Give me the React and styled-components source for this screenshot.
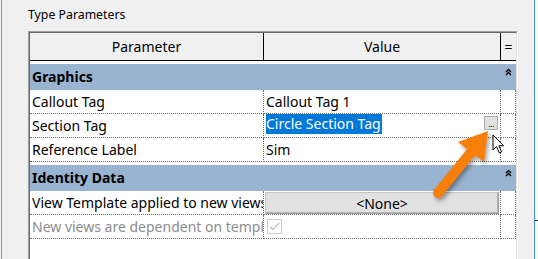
import React from "react";
import styled, { createGlobalStyle } from "styled-components";

const GlobalStyle = createGlobalStyle`
  html, body {
    margin: 0;
    padding: 0;
    background: #f0f0f0;
    font-family: "Noto Sans", "Open Sans", sans-serif;
  }
`;

const blue = "#99b4d1";
const dotted = "1px dotted #6f6f6f";

const Page = styled.div`
  position: relative;
  display: flex;
  width: 538px;
  height: 259px;
  overflow: hidden;
`;

const Frame = styled.div`
  box-sizing: border-box;
  width: 534px;
  height: 100%;
  margin-left: 1px;
  padding-left: 26px;
  border-left: 1px solid #6aa5dc;
  border-right: 1px solid #3f8fd9;
`;

const RightStrip = styled.div`
  flex: 1;
  background: #f9f9f9;
  display: flex;
  flex-direction: column;
  justify-content: flex-start;
  padding-top: 220px;

  > span {
    display: block;
    height: 1px;
    background: #333;
  }
`;

const Title = styled.div`
  padding-top: 6px;
  line-height: 17px;
  font-size: 12.3px;
  color: #000;
`;

const TableOuter = styled.div`
  margin-top: 8px;
  width: 490px;
  box-sizing: border-box;
  height: 240px;
  border: 1px solid;
  border-color: #a0a0a0 #ffffff #ffffff #a0a0a0;
`;

const TableInner = styled.div`
  height: 100%;
  box-sizing: border-box;
  border: 1px solid;
  border-color: #696969 #e3e3e3 #e3e3e3 #696969;
  background: #fff;
`;

const Grid = styled.div`
  display: grid;
  grid-template-columns: 234px 237px 15px;
  font-size: 14px;
  color: #000;
`;

const HeadCell = styled.div`
  height: 28px;
  box-sizing: border-box;
  background: #f0f0f0;
  border-bottom: 1px solid #000;
  border-right: ${(p) => (p.$last ? "none" : "1px solid #000")};
  display: flex;
  align-items: center;
  justify-content: center;
  padding-bottom: 1px;
`;

const GroupRow = styled.div`
  grid-column: 1 / -1;
  height: 29px;
  box-sizing: border-box;
  border-top: 3px solid #fff;
  background: ${blue};
  display: flex;
  justify-content: space-between;
  font-weight: bold;
`;

const GroupLabel = styled.span`
  padding-left: 2px;
  line-height: 25px;
`;

const Collapse = styled.span`
  width: 15px;
  display: flex;
  justify-content: center;
  padding-top: 4px;
`;

const Cell = styled.div`
  height: 24px;
  box-sizing: border-box;
  border-bottom: ${dotted};
  border-right: ${dotted};
  padding-left: ${(p) => (p.$pad ?? 2)}px;
  display: flex;
  align-items: center;
  justify-content: space-between;
  overflow: hidden;
  white-space: nowrap;
  color: ${(p) => (p.$muted ? "#8d8d8d" : "#000")};
`;

const Selected = styled.span`
  background: #0078d7;
  color: #fff;
  line-height: 20px;
  padding: 0 1px 0 0;
  align-self: flex-start;
`;

const DotsButton = styled.span`
  width: 14px;
  height: 14px;
  box-sizing: border-box;
  margin: 2px 2px 0 0;
  align-self: flex-start;
  background: #e1e1e1;
  border: 1px solid #adadad;
  font-size: 9px;
  line-height: 14px;
  text-align: center;
  letter-spacing: -0.5px;
`;

const NoneButton = styled.div`
  flex: 1;
  height: 22px;
  box-sizing: border-box;
  margin: 1px 1px 0 1px;
  align-self: flex-start;
  background: #e1e1e1;
  border: 1px solid;
  border-color: #c4c4c4 #a0a0a0 #a0a0a0 #c4c4c4;
  box-shadow: inset -1px -1px 0 #b4b4b4;
  display: flex;
  align-items: center;
  justify-content: center;
`;

const CheckBox = styled.span`
  width: 15px;
  height: 15px;
  box-sizing: border-box;
  margin-left: 3px;
  border: 1px solid #cccccc;
  background: #fff;
  display: flex;
  align-items: center;
  justify-content: center;
`;

const Overlay = styled.svg`
  position: absolute;
  pointer-events: none;
  overflow: visible;
`;

const Chevrons = () => (
  <svg width="7" height="8" viewBox="0 0 7 8">
    <path d="M1 4 L3.5 1.5 L6 4 M1 7 L3.5 4.5 L6 7" fill="none" stroke="#000" strokeWidth="1.3" />
  </svg>
);

const Check = () => (
  <svg width="11" height="9" viewBox="0 0 11 9">
    <path d="M1 4.5 L4 7.5 L10 1" fill="none" stroke="#c6c6c6" strokeWidth="1.4" />
  </svg>
);

const groups = [
  {
    name: "Graphics",
    rows: [
      { param: "Callout Tag", value: "Callout Tag 1" },
      { param: "Section Tag", value: "Circle Section Tag", selected: true },
      { param: "Reference Label", value: "Sim" },
    ],
  },
  {
    name: "Identity Data",
    rows: [
      { param: "View Template applied to new views", button: "<None>" },
      { param: "New views are dependent on template", check: true, muted: true },
    ],
  },
];

const renderValue = (row) => {
  if (row.selected) {
    return (
      <Cell>
        <Selected>{row.value}</Selected>
        <DotsButton>...</DotsButton>
      </Cell>
    );
  }
  if (row.button) {
    return (
      <Cell $pad={0}>
        <NoneButton>{row.button}</NoneButton>
      </Cell>
    );
  }
  if (row.check) {
    return (
      <Cell $pad={0}>
        <CheckBox>
          <Check />
        </CheckBox>
      </Cell>
    );
  }
  return <Cell>{row.value}</Cell>;
};

const App = () => {
  return (
    <Page>
      <GlobalStyle />
      <Frame>
        <Title>Type Parameters</Title>
        <TableOuter>
          <TableInner>
            <Grid>
              <HeadCell>Parameter</HeadCell>
              <HeadCell>Value</HeadCell>
              <HeadCell $last>=</HeadCell>
              {groups.map((group) => (
                <React.Fragment key={group.name}>
                  <GroupRow>
                    <GroupLabel>{group.name}</GroupLabel>
                    <Collapse>
                      <Chevrons />
                    </Collapse>
                  </GroupRow>
                  {group.rows.map((row) => (
                    <React.Fragment key={row.param}>
                      <Cell $muted={row.muted}>{row.param}</Cell>
                      {renderValue(row)}
                      <Cell />
                    </React.Fragment>
                  ))}
                </React.Fragment>
              ))}
            </Grid>
          </TableInner>
        </TableOuter>
      </Frame>
      <RightStrip>
        <span />
      </RightStrip>

      <Overlay
        style={{ left: 420, top: 120 }}
        width="80"
        height="85"
        viewBox="420 120 80 85"
      >
        <g style={{ filter: "drop-shadow(2px 3px 2px rgba(0,0,0,0.35))" }}>
          <line x1="438" y1="193" x2="472" y2="151" stroke="#f7800a" strokeWidth="10" strokeLinecap="round" />
          <polygon points="458,142 488,131 484,162" fill="#f7800a" />
        </g>
      </Overlay>
      <Overlay style={{ left: 492, top: 134 }} width="14" height="21" viewBox="0 0 14 21">
        <path
          d="M1 1 L1 16 L4.6 12.6 L7.4 19 L9.6 18 L6.9 11.8 L11.6 11.8 Z"
          fill="#fff"
          stroke="#000"
          strokeWidth="1"
          strokeLinejoin="round"
        />
      </Overlay>
    </Page>
  );
};

export default App;
